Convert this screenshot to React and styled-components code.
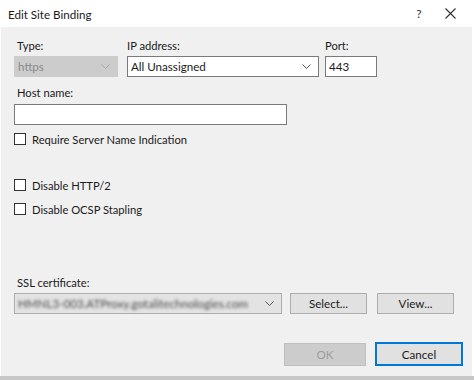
import React from "react";
import styled, { createGlobalStyle } from "styled-components";

const GlobalStyle = createGlobalStyle`
  html, body {
    margin: 0;
    padding: 0;
    background: #ffffff;
  }
  body {
    font-family: Lato, "Noto Sans", "Liberation Sans", sans-serif;
  }
`;

const Window = styled.div`
  width: 474px;
  height: 380px;
  display: flex;
  flex-direction: column;
  background: #ffffff;
  overflow: hidden;
`;

const TitleBar = styled.div`
  height: 27px;
  display: flex;
  align-items: center;
  padding-left: 8px;
  font-size: 11.6px;
  color: #1a1a1a;
  flex-shrink: 0;
`;

const Title = styled.span`
  flex: 1;
  margin-top: 1px;
`;

const TitleButton = styled.span`
  width: ${({ $w }) => $w}px;
  display: flex;
  justify-content: center;
  align-items: center;
  font-size: 12px;
  color: #333;
`;

const Body = styled.div`
  flex: 1;
  margin: 0 2px 0 1px;
  background: #f0f0f0;
  padding: 12px 0 0 12px;
  display: flex;
  flex-direction: column;
  font-size: 11.2px;
  color: #1a1a1a;
`;

const BottomEdge = styled.div`
  height: 4px;
  background: #c7c7c7;
  flex-shrink: 0;
`;

const Row = styled.div`
  display: flex;
  align-items: flex-start;
  gap: ${({ $gap }) => $gap || 0}px;
  margin-top: ${({ $top }) => $top || 0}px;
`;

const Field = styled.div`
  display: flex;
  flex-direction: column;
  gap: ${({ $gap }) => $gap || 3}px;
  margin-left: ${({ $left }) => $left || 0}px;
  margin-top: ${({ $top }) => $top || 0}px;
`;

const Label = styled.div`
  height: 14px;
  line-height: 14px;
  padding-left: ${({ $pad }) => ($pad === undefined ? 3 : $pad)}px;
  white-space: nowrap;
`;

const SelectBox = styled.div`
  box-sizing: border-box;
  width: ${({ $w }) => $w}px;
  height: 21px;
  display: flex;
  align-items: center;
  padding: 0 7px 0 3px;
  background: ${({ $tone }) =>
    $tone === "disabled" ? "#cccccc" : $tone === "muted" ? "#e3e3e3" : "#ffffff"};
  border: 1px solid
    ${({ $tone }) =>
      $tone === "disabled" ? "#cccccc" : $tone === "muted" ? "#adadad" : "#7a7a7a"};
  color: ${({ $tone }) => ($tone === "disabled" ? "#8a8a8a" : "#1a1a1a")};
  font-size: 11.6px;
`;

const SelectText = styled.span`
  flex: 1;
  white-space: nowrap;
  overflow: hidden;
  ${({ $blur }) => ($blur ? "filter: blur(1.4px); color: #4a4a4a;" : "")}
`;

const TextInput = styled.div`
  box-sizing: border-box;
  width: ${({ $w }) => $w}px;
  height: 21px;
  display: flex;
  align-items: center;
  padding-left: 3px;
  background: #ffffff;
  border: 1px solid #7a7a7a;
  font-size: 11.6px;
`;

const CheckRow = styled.label`
  display: flex;
  align-items: center;
  gap: 6px;
  height: 14px;
  margin-top: ${({ $top }) => $top}px;
  margin-left: 1px;
`;

const Box = styled.span`
  box-sizing: border-box;
  width: 12px;
  height: 12px;
  background: #ffffff;
  border: 1px solid #333333;
`;

const Button = styled.div`
  box-sizing: border-box;
  width: ${({ $w }) => $w}px;
  height: ${({ $h }) => $h || 22}px;
  margin-left: ${({ $left }) => $left || 0}px;
  display: flex;
  align-items: center;
  justify-content: center;
  background: ${({ $disabled }) => ($disabled ? "#cccccc" : "#e1e1e1")};
  border: ${({ $primary }) => ($primary ? "2px" : "1px")} solid
    ${({ $disabled, $primary }) =>
      $primary ? "#0078d7" : $disabled ? "#bfbfbf" : "#adadad"};
  color: ${({ $disabled }) => ($disabled ? "#9d9d9d" : "#1a1a1a")};
  font-size: 11.6px;
`;

const Footer = styled.div`
  display: flex;
  justify-content: flex-end;
  align-items: center;
  gap: 9px;
  margin-top: 28px;
  padding-right: 9px;
`;

const Chevron = ({ color = "#555" }) => (
  <svg width="9" height="5" viewBox="0 0 9 5">
    <path d="M0.5 0.5 L4.5 4.5 L8.5 0.5" fill="none" stroke={color} strokeWidth="1" />
  </svg>
);

const CloseIcon = () => (
  <svg width="11" height="11" viewBox="0 0 11 11">
    <path d="M0.5 0.5 L10.5 10.5 M10.5 0.5 L0.5 10.5" stroke="#333" strokeWidth="1.1" />
  </svg>
);

const Checkbox = ({ label, top }) => (
  <CheckRow $top={top}>
    <Box />
    <span>{label}</span>
  </CheckRow>
);

export default function App() {
  return (
    <>
      <GlobalStyle />
      <Window>
        <TitleBar>
          <Title>Edit Site Binding</Title>
          <TitleButton $w={14}>?</TitleButton>
          <TitleButton $w={48}>
            <CloseIcon />
          </TitleButton>
        </TitleBar>
        <Body>
          <Row>
            <Field $left={1}>
              <Label>Type:</Label>
              <SelectBox $w={104} $tone="disabled">
                <SelectText>https</SelectText>
                <Chevron color="#a8a8a8" />
              </SelectBox>
            </Field>
            <Field $left={9}>
              <Label $pad={0}>IP address:</Label>
              <SelectBox $w={192}>
                <SelectText>All Unassigned</SelectText>
                <Chevron />
              </SelectBox>
            </Field>
            <Field $left={6}>
              <Label $pad={0}>Port:</Label>
              <TextInput $w={52}>443</TextInput>
            </Field>
          </Row>
          <Field $left={1} $top={9} $gap={4}>
            <Label>Host name:</Label>
            <TextInput $w={273} />
          </Field>
          <Checkbox label="Require Server Name Indication" top={7} />
          <Checkbox label="Disable HTTP/2" top={32} />
          <Checkbox label="Disable OCSP Stapling" top={10} />
          <Field $left={1} $top={60}>
            <Label>SSL certificate:</Label>
            <Row $gap={8}>
              <SelectBox $w={268} $tone="muted">
                <SelectText $blur>HMNL3-003.ATProxy.gotalitechnologies.com</SelectText>
                <Chevron />
              </SelectBox>
              <Button $w={77} $h={21}>Select...</Button>
              <Button $w={77} $h={21} $left={2}>View...</Button>
            </Row>
          </Field>
          <Footer>
            <Button $w={82} $h={23} $disabled>OK</Button>
            <Button $w={88} $h={24} $primary>Cancel</Button>
          </Footer>
        </Body>
        <BottomEdge />
      </Window>
    </>
  );
}
